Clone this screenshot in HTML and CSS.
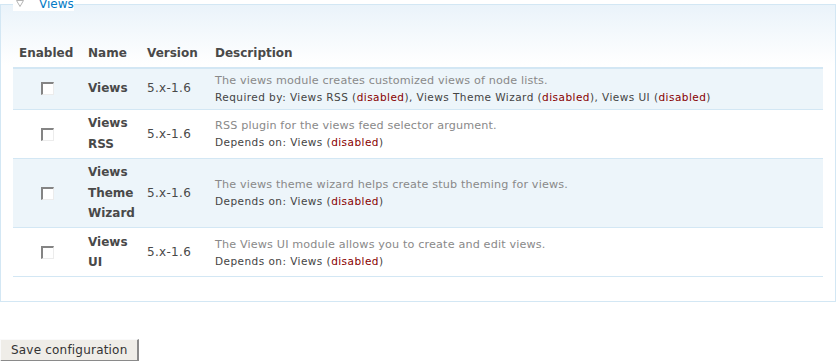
FILE: index.html
```html
<!DOCTYPE html>
<html lang="en">
<head>
    <meta charset="UTF-8">
    <title>Modules - Views</title>
    <link rel="stylesheet" href="styles.css">
</head>
<body>

    <form class="system-modules">

        <fieldset class="collapsible">
            <legend>
                <a class="fieldset-title" href="#">
                    <svg class="toggle" width="8" height="7" viewBox="0 0 8 7">
                        <polygon points="0.5,0.5 7.5,0.5 4,6.5" fill="#fff" stroke="#b4b4b4" stroke-width="1"/>
                    </svg>Views
                </a>
            </legend>

            <table class="modules">
                <thead>
                    <tr>
                        <th class="col-enabled">Enabled</th>
                        <th class="col-name">Name</th>
                        <th class="col-version">Version</th>
                        <th>Description</th>
                    </tr>
                </thead>
                <tbody>
                    <tr class="even">
                        <td class="checkbox"><input type="checkbox" class="form-checkbox"></td>
                        <td class="name">Views</td>
                        <td class="version">5.x-1.6</td>
                        <td>
                            <div class="description">The views module creates customized views of node lists.</div>
                            <div class="admin-dependencies">Required by: Views RSS (<span class="admin-disabled">disabled</span>), Views Theme Wizard (<span class="admin-disabled">disabled</span>), Views UI (<span class="admin-disabled">disabled</span>)</div>
                        </td>
                    </tr>
                    <tr class="odd">
                        <td class="checkbox"><input type="checkbox" class="form-checkbox"></td>
                        <td class="name">Views RSS</td>
                        <td class="version">5.x-1.6</td>
                        <td>
                            <div class="description">RSS plugin for the views feed selector argument.</div>
                            <div class="admin-dependencies">Depends on: Views (<span class="admin-disabled">disabled</span>)</div>
                        </td>
                    </tr>
                    <tr class="even">
                        <td class="checkbox"><input type="checkbox" class="form-checkbox"></td>
                        <td class="name">Views Theme Wizard</td>
                        <td class="version">5.x-1.6</td>
                        <td>
                            <div class="description">The views theme wizard helps create stub theming for views.</div>
                            <div class="admin-dependencies">Depends on: Views (<span class="admin-disabled">disabled</span>)</div>
                        </td>
                    </tr>
                    <tr class="odd">
                        <td class="checkbox"><input type="checkbox" class="form-checkbox"></td>
                        <td class="name">Views UI</td>
                        <td class="version">5.x-1.6</td>
                        <td>
                            <div class="description">The Views UI module allows you to create and edit views.</div>
                            <div class="admin-dependencies">Depends on: Views (<span class="admin-disabled">disabled</span>)</div>
                        </td>
                    </tr>
                </tbody>
            </table>
        </fieldset>

        <input type="submit" class="form-submit" value="Save configuration">

    </form>

</body>
</html>
```

FILE: styles.css
```css
body {
    margin: 0;
    font-family: "DejaVu Sans", Verdana, sans-serif;
    font-size: 12px;
    line-height: 170%;
    color: #494949;
    background-color: #fff;
}

fieldset {
    margin: 0;
    padding: 30px 12px 24px;
    border: 1px solid #d3e7f4;
    background: linear-gradient(to bottom, #eaf3fa 0, #fff 60px);
}

legend {
    padding: 0;
    line-height: 9px;
}

.fieldset-title {
    color: #027ac6;
    text-decoration: none;
    background-color: #fff;
}

.toggle {
    margin: 0 15px 0 3px;
    vertical-align: 1px;
}

/* table of modules */

table.modules {
    width: 100%;
    border-collapse: collapse;
    table-layout: fixed;
}

th, td {
    box-sizing: border-box;
    padding: 0.3em 0.5em;
    text-align: left;
    vertical-align: middle;
}

thead th {
    font-weight: bold;
    color: #494949;
    border-bottom: 2px solid #d3e7f4;
}

.col-enabled {
    width: 69px;
}

.col-name {
    width: 59px;
}

.col-version {
    width: 68px;
}

tbody tr {
    border-bottom: 1px solid #d3e7f4;
}

tr.even {
    background-color: #edf5fa;
}

tr.odd {
    background-color: #fff;
}

td.checkbox {
    text-align: center;
}

td.name {
    font-weight: bold;
}

td.version {
    letter-spacing: 0.3px;
}

.form-checkbox {
    appearance: none;
    display: inline-block;
    box-sizing: border-box;
    width: 13px;
    height: 13px;
    margin: 0;
    vertical-align: middle;
    background-color: #fff;
    border-style: solid;
    border-width: 2px 1px 1px 2px;
    border-color: #848484 #ececec #ececec #848484;
}

.description {
    font-size: 11.2px;
    line-height: 17px;
    letter-spacing: 0.15px;
    color: #898989;
}

.admin-dependencies {
    font-size: 10.5px;
    line-height: 16px;
    letter-spacing: 0.45px;
    color: #444;
}

.admin-disabled {
    color: #800;
}

.form-submit {
    display: block;
    margin: 37px 0 0;
    height: 23px;
    padding: 0 10px;
    font-family: "DejaVu Sans", Verdana, sans-serif;
    font-size: 12px;
    letter-spacing: 0.2px;
    color: #333;
    background-color: #efede8;
    border-style: solid;
    border-width: 1px 2px 2px 1px;
    border-color: #fafafa #8a8a8a #8a8a8a #fafafa;
}
```
